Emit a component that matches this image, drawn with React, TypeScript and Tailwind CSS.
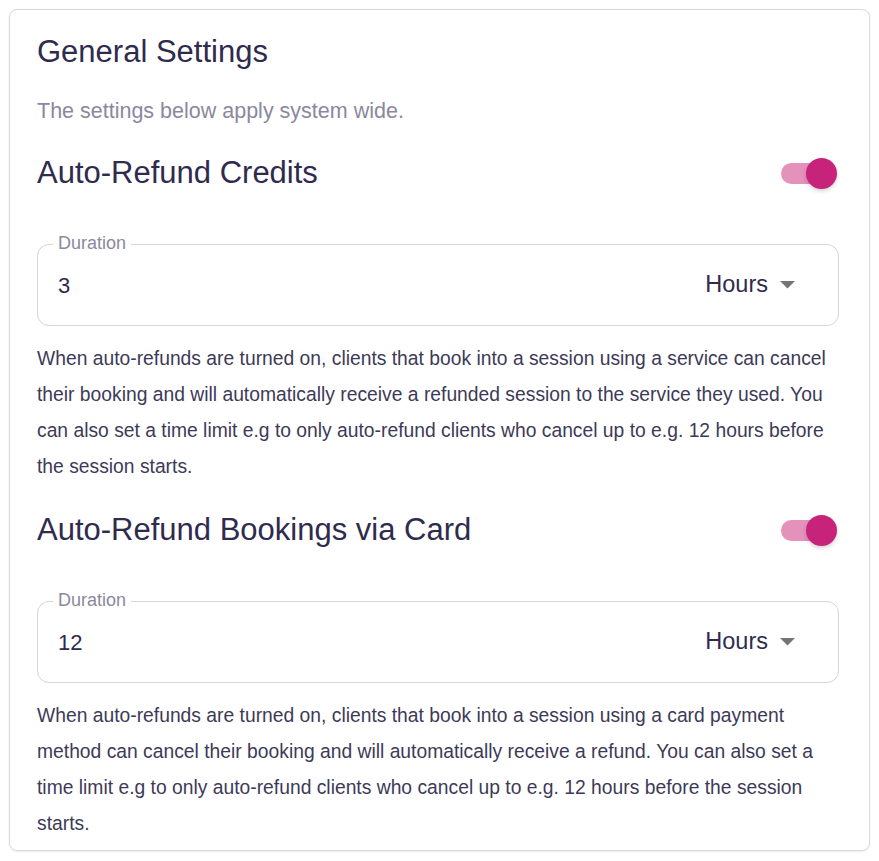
import React from "react";

function Toggle() {
  return (
    <div className="relative h-[31px] w-[56px]">
      <div className="absolute left-0 top-[5px] h-[21px] w-[49px] rounded-full bg-[#e491bc]" />
      <div className="absolute right-0 top-0 h-[31px] w-[31px] rounded-full bg-[#c8237b] shadow-[0_2px_4px_rgba(0,0,0,0.18)]" />
    </div>
  );
}

function DurationField({ value }: { value: string }) {
  return (
    <div className="relative flex h-[82px] items-center rounded-[12px] border border-[#d5d5da] pl-[20px] pr-[43px]">
      <span className="absolute -top-[13px] left-[15px] bg-white px-[5px] text-[18px] leading-[22px] text-[#8b889e]">
        Duration
      </span>
      <span className="flex-1 text-[22px] text-[#2f2b4e]">{value}</span>
      <span className="text-[23.5px] text-[#2f2b4e]">Hours</span>
      <svg width="15" height="8" viewBox="0 0 15 8" className="ml-[12px]">
        <polygon points="0,0 15,0 7.5,7.5" fill="#757575" />
      </svg>
    </div>
  );
}

function Section({ title, value, text }: { title: string; value: string; text: string }) {
  return (
    <>
      <div className="flex h-[40px] items-center justify-between">
        <h2 className="text-[31px] text-[#2f2b4e]">{title}</h2>
        <div className="mr-[2px]">
          <Toggle />
        </div>
      </div>
      <div className="mt-[51px]">
        <DurationField value={value} />
      </div>
      <p className="mt-[15px] text-[19.3px] leading-[36px] text-[#3d3a57]">{text}</p>
    </>
  );
}

export default function App() {
  return (
    <div className="min-h-screen bg-white p-[9px] font-['Liberation_Sans',Arial,sans-serif]">
      <div className="rounded-[8px] border border-[#d9d9d9] pb-[8px] pl-[27px] pr-[30px] pt-[26px] shadow-[0_1px_2px_rgba(0,0,0,0.08)]">
        <h1 className="text-[31px] leading-[32px] text-[#2f2b4e]">General Settings</h1>
        <p className="mt-[31px] text-[21.5px] leading-[24px] text-[#8b889e]">The settings below apply system wide.</p>
        <div className="mt-[30px]">
          <Section
            title="Auto-Refund Credits"
            value="3"
            text="When auto-refunds are turned on, clients that book into a session using a service can cancel their booking and will automatically receive a refunded session to the service they used. You can also set a time limit e.g to only auto-refund clients who cancel up to e.g. 12 hours before the session starts."
          />
        </div>
        <div className="mt-[25px]">
          <Section
            title="Auto-Refund Bookings via Card"
            value="12"
            text="When auto-refunds are turned on, clients that book into a session using a card payment method can cancel their booking and will automatically receive a refund. You can also set a time limit e.g to only auto-refund clients who cancel up to e.g. 12 hours before the session starts."
          />
        </div>
      </div>
    </div>
  );
}
